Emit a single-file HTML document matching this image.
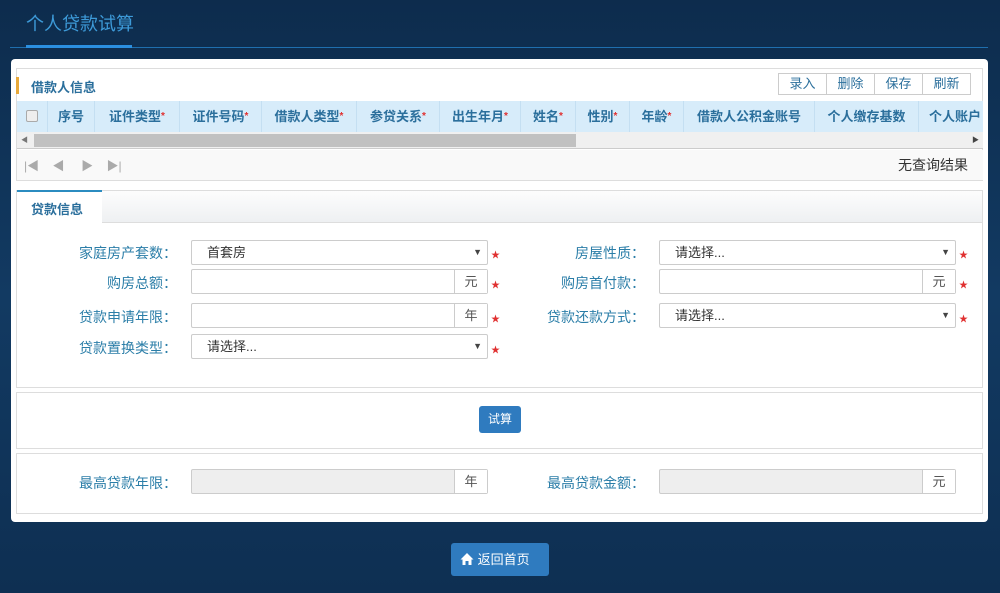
<!DOCTYPE html>
<html><head><meta charset="utf-8"><style>
*{margin:0;padding:0;box-sizing:border-box}
body{width:1000px;height:593px;overflow:hidden;position:relative;font-family:"Liberation Sans","Noto Sans CJK SC",sans-serif;font-size:13px;background:linear-gradient(180deg,#0d2c4d 0%,#123a62 50%,#0e2f52 100%)}
.a{position:absolute}
.title{left:26px;top:10px;color:#3d9ad8;font-size:18px}
.lbl{color:#2b7ea8;text-align:right;width:172px;font-size:14px}
.inp{background:#fff;border:1px solid #ccc;height:25px;border-radius:2px;color:#333;padding-left:15px;line-height:23px}
.unit{border-left:1px solid #ccc;position:absolute;right:0;top:0;width:33px;height:23px;text-align:center;color:#555;background:#fff}
.star{color:#e03030;font-size:9px}
.arr{position:absolute;right:5px;top:0;font-size:9px;color:#444}
.th{position:absolute;top:0;height:31px;line-height:31px;text-align:center;color:#2b6f9c;font-weight:bold;border-right:1px solid #c4dff2;font-size:13px}
.th i{color:#e03030;font-style:normal;font-size:10px;vertical-align:top}
.btn{position:absolute;top:0;height:22px;line-height:20px;border:1px solid #ccc;background:#fff;color:#2b6f9c;text-align:center;width:49px}
</style></head><body>
<div class="a title">个人贷款试算</div>
<div class="a" style="left:10px;top:47px;width:978px;height:1px;background:#1f6fae"></div>
<div class="a" style="left:26px;top:45px;width:106px;height:3px;background:#2b8fe0"></div>

<div class="a" style="left:11px;top:59px;width:977px;height:463px;background:#fff;border-radius:4px"></div>

<div class="a" style="left:16px;top:68px;width:967px;height:113px;border:1px solid #ddd;background:#fff"></div>
<div class="a" style="left:16px;top:77px;width:3px;height:17px;background:#e8a93a"></div>
<div class="a" style="left:31px;top:77px;color:#2b6f9c;font-weight:bold">借款人信息</div>
<div class="a" style="left:778px;top:73px;width:196px;height:22px">
<div class="btn" style="left:0">录入</div><div class="btn" style="left:48px">删除</div><div class="btn" style="left:96px">保存</div><div class="btn" style="left:144px">刷新</div></div>
<div class="a" style="left:17px;top:101px;width:966px;height:31px;background:#d7ecfa;overflow:hidden">
<div class="th" style="left:0;width:31px"><span style="display:inline-block;width:12px;height:12px;border:1px solid #aaa;background:#eee;border-radius:2px;margin-top:9px"></span></div>
<div class="th" style="left:31px;width:47px">序号</div>
<div class="th" style="left:78px;width:85px">证件类型<i>*</i></div>
<div class="th" style="left:163px;width:82px">证件号码<i>*</i></div>
<div class="th" style="left:245px;width:95px">借款人类型<i>*</i></div>
<div class="th" style="left:340px;width:83px">参贷关系<i>*</i></div>
<div class="th" style="left:423px;width:81px">出生年月<i>*</i></div>
<div class="th" style="left:504px;width:55px">姓名<i>*</i></div>
<div class="th" style="left:559px;width:54px">性别<i>*</i></div>
<div class="th" style="left:613px;width:54px">年龄<i>*</i></div>
<div class="th" style="left:667px;width:131px">借款人公积金账号</div>
<div class="th" style="left:798px;width:104px">个人缴存基数</div>
<div class="th" style="left:902px;width:80px;text-align:left;padding-left:10px;border:0">个人账户</div>
</div>
<div class="a" style="left:17px;top:132px;width:966px;height:17px;background:#f0f0f0;border-bottom:1px solid #ccc"></div>
<div class="a" style="left:34px;top:134px;width:542px;height:13px;background:#c1c1c1"></div>
<div class="a" style="left:21px;top:135px;font-size:7px;color:#777">◀</div>
<div class="a" style="left:972px;top:135px;font-size:7px;color:#444">▶</div>
<div class="a" style="left:17px;top:150px;width:966px;height:30px;background:#f9f9f9"></div>
<div class="a" style="left:24px;top:157px;color:#aaa;font-size:12px">|◀&nbsp;&nbsp;&nbsp;&nbsp;◀&nbsp;&nbsp;&nbsp;&nbsp;&nbsp;▶&nbsp;&nbsp;&nbsp;&nbsp;▶|</div>
<div class="a" style="left:898px;top:155px;color:#333;font-size:14px">无查询结果</div>

<div class="a" style="left:16px;top:190px;width:967px;height:198px;border:1px solid #ddd"></div>
<div class="a" style="left:17px;top:191px;width:965px;height:32px;background:linear-gradient(#fdfdfd,#eef0f2);border-bottom:1px solid #ddd"></div>
<div class="a" style="left:17px;top:190px;width:85px;height:34px;background:#fff;border-top:2px solid #2b8cc0;color:#2b6f9c;font-weight:bold;padding:7px 0 0 14px">贷款信息</div>

<div class="a lbl" style="left:5px;top:243px">家庭房产套数：</div>
<div class="a inp" style="left:191px;top:240px;width:297px">首套房<span class="arr">▼</span></div>
<div class="a star" style="left:491px;top:248px">★</div>
<div class="a lbl" style="left:5px;top:273px">购房总额：</div>
<div class="a inp" style="left:191px;top:269px;width:297px"><span class="unit">元</span></div>
<div class="a star" style="left:491px;top:278px">★</div>
<div class="a lbl" style="left:5px;top:307px">贷款申请年限：</div>
<div class="a inp" style="left:191px;top:303px;width:297px"><span class="unit">年</span></div>
<div class="a star" style="left:491px;top:312px">★</div>
<div class="a lbl" style="left:5px;top:338px">贷款置换类型：</div>
<div class="a inp" style="left:191px;top:334px;width:297px">请选择...<span class="arr">▼</span></div>
<div class="a star" style="left:491px;top:343px">★</div>

<div class="a lbl" style="left:473px;top:243px">房屋性质：</div>
<div class="a inp" style="left:659px;top:240px;width:297px">请选择...<span class="arr">▼</span></div>
<div class="a star" style="left:959px;top:248px">★</div>
<div class="a lbl" style="left:473px;top:273px">购房首付款：</div>
<div class="a inp" style="left:659px;top:269px;width:297px"><span class="unit">元</span></div>
<div class="a star" style="left:959px;top:278px">★</div>
<div class="a lbl" style="left:473px;top:307px">贷款还款方式：</div>
<div class="a inp" style="left:659px;top:303px;width:297px">请选择...<span class="arr">▼</span></div>
<div class="a star" style="left:959px;top:312px">★</div>

<div class="a" style="left:16px;top:392px;width:967px;height:57px;border:1px solid #ddd"></div>
<div class="a" style="left:479px;top:406px;width:42px;height:27px;background:#2f7bbf;border-radius:3px;color:#fff;text-align:center;line-height:27px;font-size:12px">试算</div>

<div class="a" style="left:16px;top:453px;width:967px;height:61px;border:1px solid #ddd"></div>
<div class="a lbl" style="left:5px;top:473px">最高贷款年限：</div>
<div class="a inp" style="left:191px;top:469px;width:297px;background:#eee"><span class="unit">年</span></div>
<div class="a lbl" style="left:473px;top:473px">最高贷款金额：</div>
<div class="a inp" style="left:659px;top:469px;width:297px;background:#eee"><span class="unit">元</span></div>

<div class="a" style="left:451px;top:543px;width:98px;height:33px;background:#2f7bbf;border-radius:3px;color:#fff;line-height:33px;font-size:13px;padding-left:9px">
<svg width="14" height="14" viewBox="0 0 14 14" style="vertical-align:-2px"><path d="M7 1L0.5 7.5H2.5V13H5.5V9H8.5V13H11.5V7.5H13.5Z" fill="#fff"/></svg> 返回首页</div>
</body></html>
